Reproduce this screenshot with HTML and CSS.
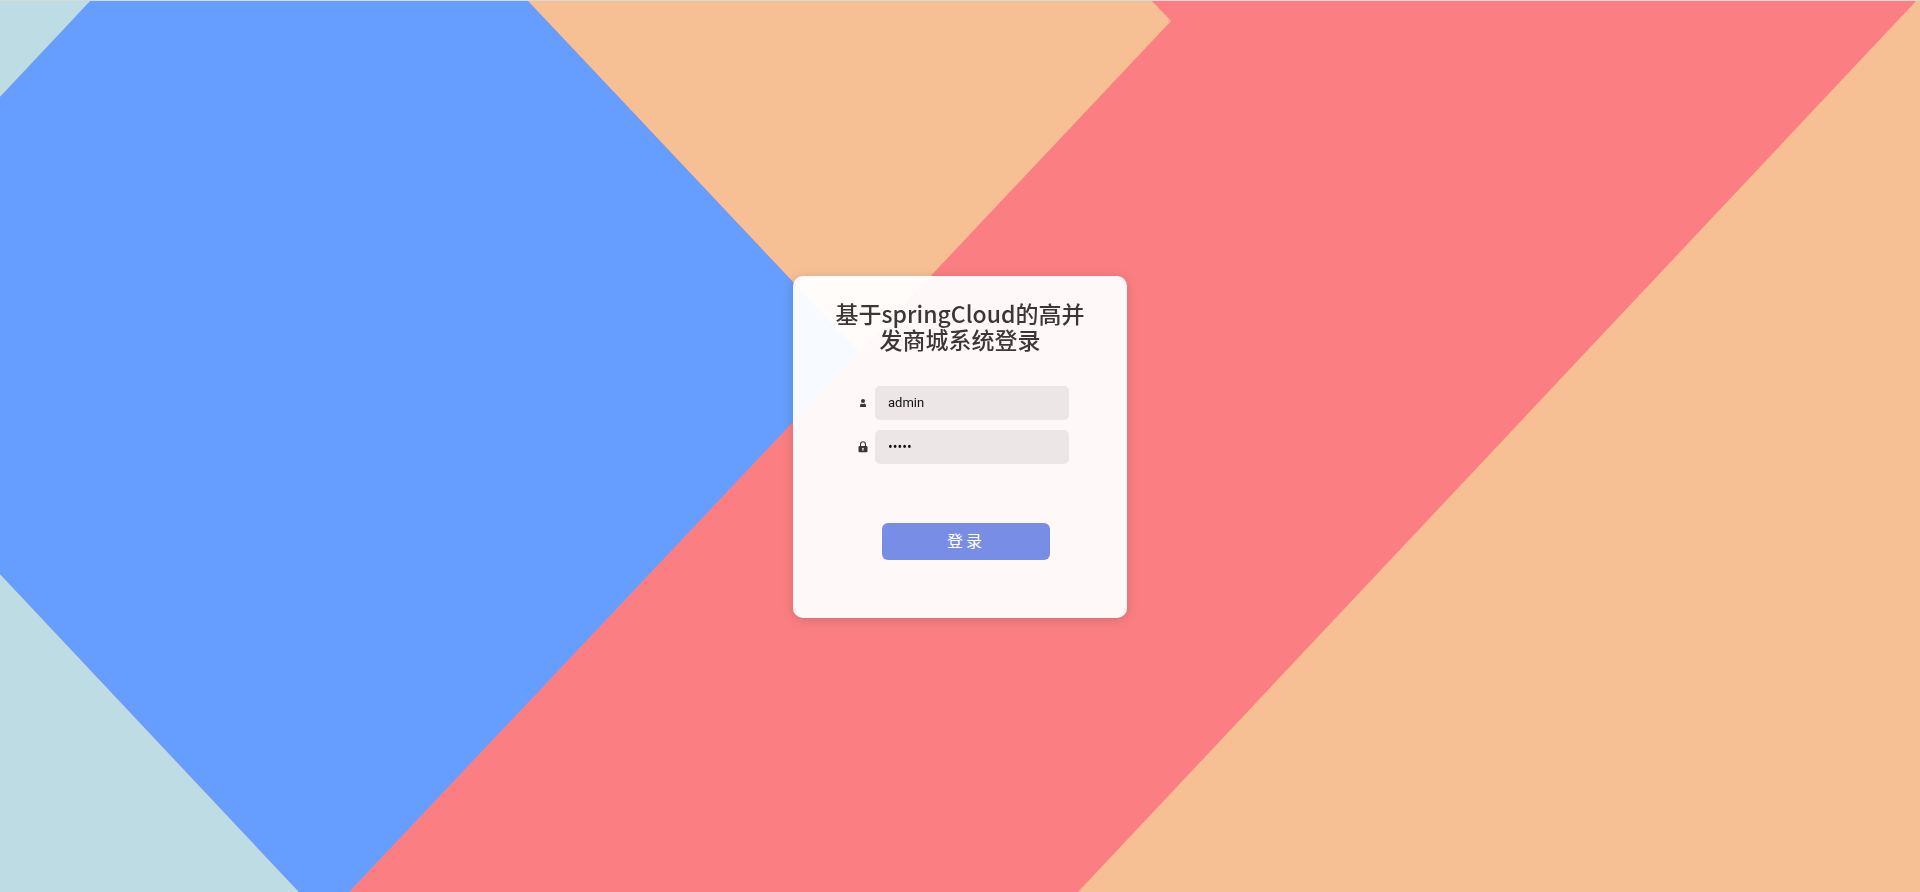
FILE: index.html
```html
<!DOCTYPE html>
<html lang="zh-CN">
<head>
<meta charset="utf-8">
<title>登录</title>
<link rel="stylesheet" href="styles.css">
</head>
<body>
<svg class="backdrop" viewBox="0 0 1920 892" preserveAspectRatio="xMidYMid slice" aria-hidden="true">
  <rect width="1920" height="892" fill="#fb7f82"/>
  <path d="M1917 0H1920V892H1078Z" fill="#f7bf94"/>
  <path d="M527 0H1151L1171 21L859 352Z" fill="#f7bf94"/>
  <path d="M0 0H92L0 97Z" fill="#bddce3"/>
  <path d="M0 574L299 892H0Z" fill="#bddce3"/>
  <path d="M91 0H527L859 352L349 892H299L0 574V97Z" fill="#669eff"/>
</svg>
<main class="page">
  <form class="card">
    <h1 class="title">基于springCloud的高并发商城系统登录</h1>
    <div class="fields">
      <div class="field">
        <label class="icon" for="username" aria-label="用户名">
          <svg viewBox="0 0 10 14"><circle cx="5" cy="4.9" r="2"/><path d="M2 11V9.8Q2 7.9 3.8 7.5L5 8.2L6.2 7.5Q8 7.9 8 9.8V11Z"/></svg>
        </label>
        <input class="input" id="username" type="text" value="admin">
      </div>
      <div class="field">
        <label class="icon" for="password" aria-label="密码">
          <svg viewBox="0 0 10 14"><path fill-rule="evenodd" d="M2 6V4.2A3 3 0 0 1 8 4.2V6H8.5Q9.5 6 9.5 7V11.3Q9.5 12.3 8.5 12.3H1.5Q.5 12.3 .5 11.3V7Q.5 6 1.5 6ZM3.1 6H6.9V4.2A1.9 1.9 0 0 0 3.1 4.2ZM5 7.8A1 1 0 0 0 4.5 9.6V10.8H5.4V9.6A1 1 0 0 0 5 7.8Z"/></svg>
        </label>
        <input class="input" id="password" type="password" value="admin">
      </div>
    </div>
    <button class="submit" type="button">登录</button>
  </form>
</main>
</body>
</html>
```
FILE: styles.css
```css
* {
  box-sizing: border-box;
}

body {
  margin: 0;
  font-family: Roboto, "Noto Sans CJK SC", sans-serif;
  color: #3d3637;
}

.backdrop {
  position: fixed;
  inset: 0;
  z-index: -1;
  width: 100%;
  height: 100%;
}

.page {
  display: flex;
  align-items: center;
  justify-content: center;
  min-height: 100vh;
  border-top: 1px solid #d9d9d9;
}

.card {
  display: flex;
  flex-direction: column;
  width: 334px;
  padding: 24px 40px 58px;
  border-radius: 10px;
  background: rgba(255, 255, 255, 0.95);
  box-shadow: 0 2px 12px rgba(0, 0, 0, 0.15);
}

.title {
  margin: 0 0 34px;
  font-family: "Noto Sans CJK SC", sans-serif;
  font-size: 23px;
  font-weight: 500;
  line-height: 26px;
  text-align: center;
}

.fields {
  display: flex;
  flex-direction: column;
  gap: 10px;
  padding: 0 18px 0 25px;
}

.field {
  display: flex;
  align-items: center;
  gap: 7px;
}

.icon {
  display: flex;
  width: 10px;
}

.icon svg {
  width: 10px;
  height: 14px;
  fill: #3d3637;
}

.input {
  flex: 1;
  min-width: 0;
  height: 34px;
  padding: 0 13px;
  border: 0;
  border-radius: 5px;
  outline: 0;
  background: #ece6e6;
  color: #111;
  font-family: Roboto, sans-serif;
  font-size: 13px;
}

.input[type="password"] {
  font-size: 14px;
}

.submit {
  align-self: center;
  width: 168px;
  height: 37px;
  margin: 59px 0 0 12px;
  padding: 0 0 2px;
  border: 0;
  border-radius: 6px;
  background: #788de5;
  color: #fff;
  font-family: "Noto Sans CJK SC", sans-serif;
  font-size: 16px;
  letter-spacing: 3px;
}
```
